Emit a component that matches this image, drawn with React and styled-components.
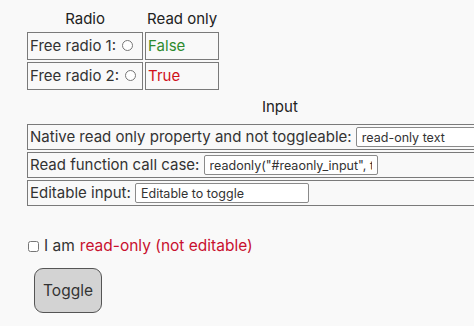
import React, { useState } from "react";
import styled, { createGlobalStyle } from "styled-components";

const GlobalStyle = createGlobalStyle`
  html, body {
    margin: 0;
    background: #f9f9f9;
    overflow: hidden;
  }
  body {
    font-family: Inter, "Noto Sans", sans-serif;
    font-size: 15px;
    color: #333;
  }
`;

const Page = styled.div`
  padding: 7px 0 0 25px;
  width: 600px;
`;

const Table = styled.table`
  border-collapse: separate;
  border-spacing: 2px;
`;

const Head = styled.th`
  font-weight: normal;
  padding: 1px 2px 2px;
  text-align: center;
  color: #222;
  line-height: 18px;
`;

const Cell = styled.td`
  border: 1px solid #7a7a7a;
  padding: 0 2px;
  height: 26px;
  line-height: 18px;
  white-space: nowrap;
  color: ${(p) => p.$color || "#333"};
`;

const Radio = styled.input`
  margin: 0 4px 0 6px;
  width: 11px;
  height: 11px;
  vertical-align: 0;
  accent-color: #777;
`;

const Field = styled.input`
  width: 174px;
  height: 20px;
  box-sizing: border-box;
  border: 1px solid #8a8a8a;
  border-radius: 2px;
  background: #fff;
  font-family: Inter, "Noto Sans", sans-serif;
  font-size: 12.5px;
  color: #333;
  padding: 0 5px;
  vertical-align: 0;
  outline: none;
`;

const InputHead = styled(Head)`
  padding: 4px 0 6px;
`;

const Row = styled.td`
  border: 1px solid #7a7a7a;
  padding: 0 2px;
  height: 24px;
  line-height: 18px;
  white-space: nowrap;
`;

const CheckLine = styled.div`
  margin-top: 29px;
  display: flex;
  align-items: center;
  padding-left: 3px;
  line-height: 18px;
  font-size: 15.5px;
`;

const Check = styled.input`
  margin: 0 5px 0 0;
  width: 11px;
  height: 11px;
  accent-color: #777;
`;

const Red = styled.span`
  color: #c8102e;
  margin-left: 5px;
`;

const ToggleButton = styled.button`
  margin: 13px 0 0 9px;
  width: 68px;
  height: 45px;
  border: 1px solid #555;
  border-radius: 9px;
  background: #d3d3d3;
  font-family: Inter, "Noto Sans", sans-serif;
  font-size: 15.5px;
  color: #333;
  cursor: pointer;
`;

export default function App() {
  const [editable, setEditable] = useState(false);
  return (
    <>
      <GlobalStyle />
      <Page>
        <Table>
          <thead>
            <tr>
              <Head>Radio</Head>
              <Head>Read only</Head>
            </tr>
          </thead>
          <tbody>
            <tr>
              <Cell>
                Free radio 1:
                <Radio type="radio" name="r1" />
              </Cell>
              <Cell $color="#2e8b2e">False</Cell>
            </tr>
            <tr>
              <Cell>
                Free radio 2:
                <Radio type="radio" name="r2" />
              </Cell>
              <Cell $color="#d0101a">True</Cell>
            </tr>
          </tbody>
        </Table>
        <Table>
          <thead>
            <tr>
              <InputHead>Input</InputHead>
            </tr>
          </thead>
          <tbody>
            <tr>
              <Row>
                Native read only property and not toggleable:{" "}
                <Field readOnly defaultValue="read-only text" />
              </Row>
            </tr>
            <tr>
              <Row>
                Read function call case:{" "}
                <Field readOnly defaultValue={'readonly("#reaonly_input", true)'} />
              </Row>
            </tr>
            <tr>
              <Row>
                Editable input:{" "}
                <Field readOnly={!editable} defaultValue="Editable to toggle" />
              </Row>
            </tr>
          </tbody>
        </Table>
        <CheckLine>
          <Check type="checkbox" />
          I am<Red>read-only (not editable)</Red>
        </CheckLine>
        <ToggleButton onClick={() => setEditable(!editable)}>Toggle</ToggleButton>
      </Page>
    </>
  );
}
